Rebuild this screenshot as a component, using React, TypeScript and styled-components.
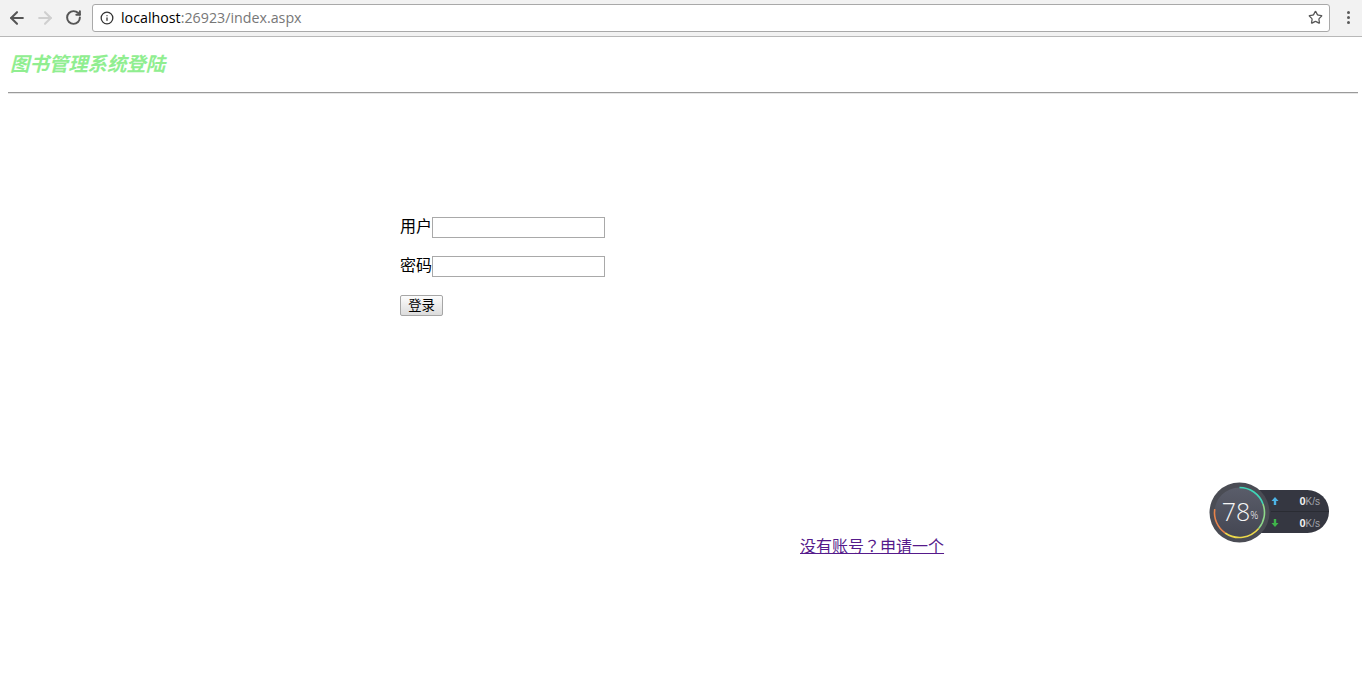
import React from 'react'
import styled, { createGlobalStyle } from 'styled-components'
import { ArrowLeft, ArrowRight, RotateCw, Info, Star } from 'lucide-react'

const GlobalStyle = createGlobalStyle`
  html, body {
    margin: 0;
    padding: 0;
    height: 100%;
    overflow: hidden;
    background: #fff;
  }
  body {
    font-family: "Liberation Serif", "Noto Sans CJK SC", serif;
    font-size: 16px;
    color: #000;
  }
`

const Window = styled.div`
  position: relative;
  width: 1362px;
  height: 676px;
  overflow: hidden;
`

const Toolbar = styled.header`
  box-sizing: border-box;
  height: 37px;
  display: flex;
  align-items: center;
  padding: 0 2px 1px 3px;
  background: #f2f2f2;
  border-bottom: 1px solid #b8b8b8;
`

const NavButton = styled.button<{ $disabled?: boolean }>`
  width: 28px;
  height: 28px;
  padding: 0;
  border: 0;
  background: none;
  display: flex;
  align-items: center;
  justify-content: center;
  color: ${p => (p.$disabled ? '#cfcfcf' : '#555')};
`

const AddressBar = styled.div`
  box-sizing: border-box;
  flex: 1;
  height: 28px;
  margin: 0 6px 0 5px;
  padding: 0 6px 0 7px;
  display: flex;
  align-items: center;
  gap: 7px;
  background: #fff;
  border: 1px solid #a9a9a9;
  border-radius: 3px;
  font-family: "Open Sans", "Liberation Sans", sans-serif;
  font-size: 14.26px;
`

const Url = styled.span`
  flex: 1;
  color: #777;
  & > b {
    font-weight: 400;
    color: #000;
  }
`

const MenuDots = styled.div`
  width: 24px;
  display: flex;
  flex-direction: column;
  align-items: center;
  gap: 2px;
  & > i {
    width: 3px;
    height: 3px;
    border-radius: 50%;
    background: #5a5a5a;
  }
`

const Page = styled.main`
  padding: 0 4px 0 8px;
`

const Title = styled.h3`
  margin: 0;
  padding: 17px 0 0 2px;
  height: 38px;
  line-height: 21px;
  font-size: 19.4px;
  font-weight: 700;
  font-style: italic;
  color: #90ee90;
  white-space: nowrap;
`

const Rule = styled.hr`
  margin: 0;
  height: 0;
  border: 0;
  border-top: 1px solid #9a9a9a;
  border-bottom: 1px solid #e6e6e6;
`

const LoginForm = styled.form`
  margin: 123px 0 0 392px;
  display: flex;
  flex-direction: column;
  gap: 18px;
  align-items: flex-start;
`

const Field = styled.label`
  height: 21px;
  display: flex;
  align-items: flex-start;
  font-size: 16px;
  line-height: 19px;
`

const TextInput = styled.input`
  box-sizing: border-box;
  width: 173px;
  height: 21px;
  margin: 0;
  padding: 1px 2px;
  border: 1px solid #a9a9a9;
  background: #fff;
`

const SubmitButton = styled.button`
  box-sizing: border-box;
  width: 43px;
  height: 21px;
  padding: 0 0 2px;
  font-family: "Noto Sans CJK SC", sans-serif;
  font-size: 13.33px;
  line-height: 17px;
  color: #000;
  border: 1px solid #a6a6a6;
  border-radius: 2px;
  background: linear-gradient(#fcfcfc, #dcdcdc);
`

const SignupRow = styled.div`
  margin: 219px 0 0 792px;
  line-height: 21px;
`

const SignupLink = styled.a`
  color: #551a8b;
  text-decoration: underline;
  font-size: 16px;
`

const FullWidthMark = styled.span`
  font-family: "Noto Sans CJK TC", sans-serif;
`

const Widget = styled.div`
  position: absolute;
  left: 1209px;
  top: 482px;
  width: 120px;
  height: 61px;
`

const SpeedPill = styled.div`
  position: absolute;
  left: 30px;
  top: 8px;
  box-sizing: border-box;
  width: 90px;
  height: 43px;
  padding: 1px 0 0 32px;
  border-radius: 0 22px 22px 0;
  background: #353741;
  display: grid;
  grid-template-rows: 21px 21px;
  font-family: "Liberation Sans", sans-serif;
`

const SpeedRow = styled.div<{ $divider?: boolean }>`
  display: flex;
  align-items: center;
  padding-right: 9px;
  border-bottom: ${p => (p.$divider ? '1px solid #2a2c33' : '0')};
`

const SpeedValue = styled.span`
  margin-left: auto;
  font-size: 11px;
  font-weight: 700;
  color: #f2f2f2;
  & > small {
    font-size: 10px;
    font-weight: 400;
    color: #a4a6ad;
  }
`

const Dial = styled.div`
  position: absolute;
  left: 0;
  top: 0;
  width: 61px;
  height: 61px;
`

const Percent = styled.div`
  position: absolute;
  inset: 0;
  display: flex;
  align-items: center;
  justify-content: center;
  padding: 0 0 4px 1px;
  font-family: "Open Sans", "Liberation Sans", sans-serif;
  font-size: 25px;
  font-weight: 300;
  color: #f6f6f6;
  & > small {
    font-size: 10px;
    margin-top: 9px;
  }
`

function polar(deg: number, r: number) {
  const a = ((deg - 90) * Math.PI) / 180
  return `${30.5 + r * Math.cos(a)} ${30.5 + r * Math.sin(a)}`
}

function arc(from: number, to: number, r: number) {
  return `M${polar(from, r)} A${r} ${r} 0 ${to - from > 180 ? 1 : 0} 1 ${polar(to, r)}`
}

export default function App() {
  return (
    <Window>
      <GlobalStyle />
      <Toolbar>
        <NavButton>
          <ArrowLeft size={20} strokeWidth={2.5} />
        </NavButton>
        <NavButton $disabled>
          <ArrowRight size={20} strokeWidth={2.5} />
        </NavButton>
        <NavButton>
          <RotateCw size={17} strokeWidth={2.8} />
        </NavButton>
        <AddressBar>
          <Info size={14} color="#333" strokeWidth={2.2} />
          <Url>
            <b>localhost</b>:26923/index.aspx
          </Url>
          <Star size={15} color="#555" strokeWidth={2} />
        </AddressBar>
        <MenuDots>
          <i />
          <i />
          <i />
        </MenuDots>
      </Toolbar>
      <Page>
        <Title>图书管理系统登陆</Title>
        <Rule />
        <LoginForm onSubmit={e => e.preventDefault()}>
          <Field>
            用户
            <TextInput type="text" />
          </Field>
          <Field>
            密码
            <TextInput type="password" />
          </Field>
          <SubmitButton>登录</SubmitButton>
        </LoginForm>
        <SignupRow>
          <SignupLink href="#">
            没有账号<FullWidthMark>？</FullWidthMark>申请一个
          </SignupLink>
        </SignupRow>
      </Page>
      <Widget>
        <SpeedPill>
          <SpeedRow $divider>
            <svg width="8" height="8" viewBox="0 0 8 8">
              <path d="M4 0 L7.5 4 H5.2 V8 H2.8 V4 H.5 Z" fill="#4db4e6" />
            </svg>
            <SpeedValue>
              0<small>K/s</small>
            </SpeedValue>
          </SpeedRow>
          <SpeedRow>
            <svg width="8" height="8" viewBox="0 0 8 8">
              <path d="M4 8 L7.5 4 H5.2 V0 H2.8 V4 H.5 Z" fill="#3fb54a" />
            </svg>
            <SpeedValue>
              0<small>K/s</small>
            </SpeedValue>
          </SpeedRow>
        </SpeedPill>
        <Dial>
          <svg width="61" height="61" viewBox="0 0 61 61">
            <defs>
              <linearGradient id="dialFill" x1="0" y1="0" x2="0" y2="1">
                <stop offset="0" stopColor="#5a5d6a" />
                <stop offset="1" stopColor="#444652" />
              </linearGradient>
            </defs>
            <circle cx="30.5" cy="30.5" r="30" fill="#4a4c54" />
            <circle cx="30.5" cy="30.5" r="25" fill="url(#dialFill)" />
            <path d={arc(0, 70, 25)} fill="none" stroke="#3fd6b8" strokeWidth="1.6" />
            <path d={arc(70, 130, 25)} fill="none" stroke="#8ed88a" strokeWidth="1.6" />
            <path d={arc(130, 215, 25)} fill="none" stroke="#ecd84a" strokeWidth="1.6" />
            <path d={arc(215, 278, 25)} fill="none" stroke="#e8834a" strokeWidth="1.6" />
          </svg>
          <Percent>
            78<small>%</small>
          </Percent>
        </Dial>
      </Widget>
    </Window>
  )
}
